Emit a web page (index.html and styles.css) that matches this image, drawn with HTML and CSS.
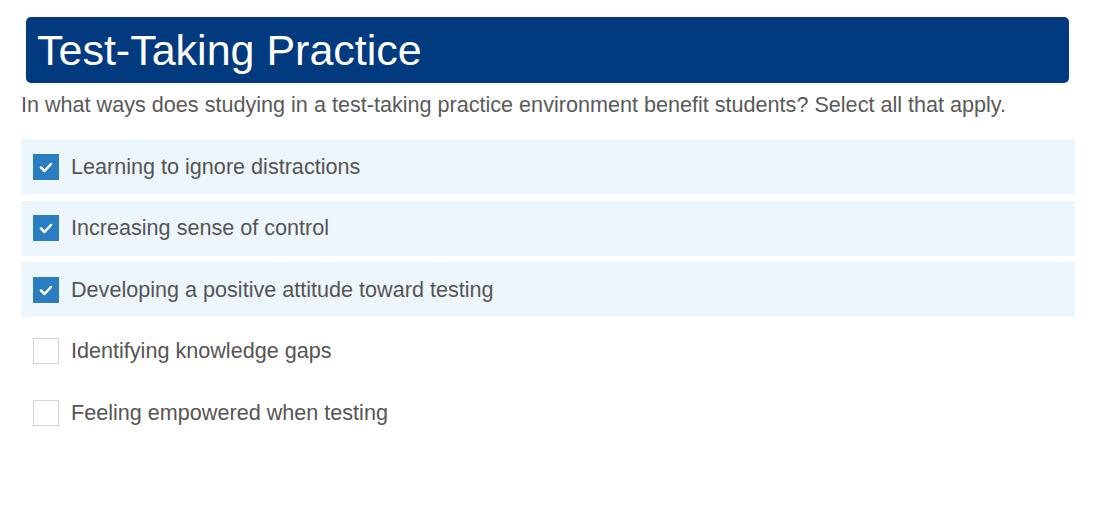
FILE: index.html
```html
<!DOCTYPE html>
<html lang="en">
<head>
<meta charset="UTF-8">
<meta name="viewport" content="width=device-width, initial-scale=1.0">
<title>Test-Taking Practice</title>
<link rel="stylesheet" href="styles.css">
</head>
<body>
<div class="quiz">
    <h1 class="quiz-title">Test-Taking Practice</h1>
    <p class="quiz-question">In what ways does studying in a test-taking practice environment benefit students? Select all that apply.</p>

    <ul class="choices">
        <li class="choice checked">
            <span class="box"><svg viewBox="0 0 26 26" width="26" height="26"><polyline points="8,13.5 11.5,17 18,10" /></svg></span>
            <span class="label">Learning to ignore distractions</span>
        </li>
        <li class="choice checked">
            <span class="box"><svg viewBox="0 0 26 26" width="26" height="26"><polyline points="8,13.5 11.5,17 18,10" /></svg></span>
            <span class="label">Increasing sense of control</span>
        </li>
        <li class="choice checked">
            <span class="box"><svg viewBox="0 0 26 26" width="26" height="26"><polyline points="8,13.5 11.5,17 18,10" /></svg></span>
            <span class="label">Developing a positive attitude toward testing</span>
        </li>
        <li class="choice">
            <span class="box"></span>
            <span class="label">Identifying knowledge gaps</span>
        </li>
        <li class="choice">
            <span class="box"></span>
            <span class="label">Feeling empowered when testing</span>
        </li>
    </ul>
</div>
</body>
</html>
```

FILE: styles.css
```css
body, html {
    margin: 0;
    padding: 0;
    background-color: white;
    font-family: 'Liberation Sans', Arial, sans-serif;
}

.quiz {
    width: 1054px;
    padding: 17px 0 0 21px;
}

.quiz-title {
    margin: 0 6px 0 5px;
    height: 66px;
    box-sizing: border-box;
    padding: 0 11px;
    background-color: #023a7f;
    border-radius: 5px;
    color: white;
    font-size: 43px;
    font-weight: normal;
    line-height: 66px;
}

.quiz-question {
    margin: 9px 0 21px 0;
    color: #5a5a5a;
    font-size: 21.6px;
    line-height: 26px;
}

.choices {
    list-style: none;
    margin: 0;
    padding: 0;
    display: flex;
    flex-direction: column;
    gap: 6.5px;
}

.choice {
    display: flex;
    align-items: center;
    gap: 12px;
    height: 55px;
    padding-left: 12px;
    color: #555555;
    font-size: 21.6px;
}

.choice.checked {
    background-color: #eef6fd;
}

.box {
    width: 26px;
    height: 26px;
    box-sizing: border-box;
    border: 1px solid #d4d4d4;
    background-color: white;
    flex-shrink: 0;
}

.choice.checked .box {
    border: none;
    background-color: #2a7dc1;
}

.box svg {
    display: block;
}

.box polyline {
    fill: none;
    stroke: white;
    stroke-width: 2.5;
    stroke-linecap: round;
    stroke-linejoin: round;
}
```
